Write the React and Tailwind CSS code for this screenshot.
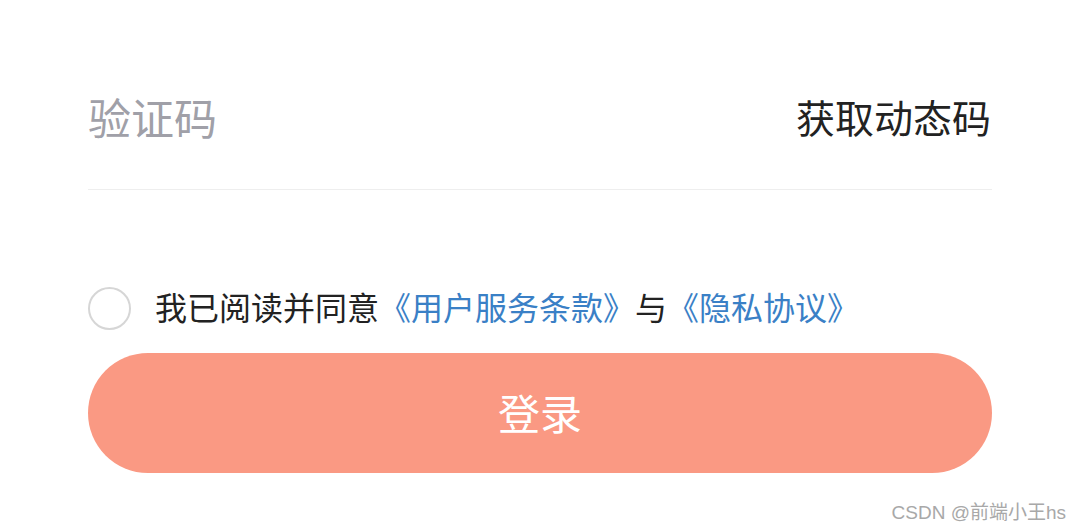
import React from 'react';

export default function App() {
  return (
    <div
      className="relative w-[1080px] h-[531px] bg-white overflow-hidden"
      style={{ fontFamily: '"Noto Sans CJK SC", "Noto Sans", sans-serif' }}
    >
      <div className="px-[88px] pt-[88px]">
        {/* verification code input */}
        <div className="flex items-center justify-between h-[56px]">
          <span className="text-[43px] leading-none text-[#a0a0a8]">验证码</span>
          <button className="text-[39px] leading-none text-[#222] pr-[1px]">获取动态码</button>
        </div>
        <div className="h-[46px] border-b border-[#eeeeee]" />

        {/* agreement */}
        <div className="flex items-center mt-[97px]">
          <div className="w-[43px] h-[43px] rounded-full border-2 border-[#d6d6d6] shrink-0" />
          <p className="ml-[24px] pb-[5px] text-[32px] leading-none text-[#222] whitespace-nowrap">
            我已阅读并同意<span className="text-[#3a80c6]">《用户服务条款》</span>与<span className="text-[#3a80c6]">《隐私协议》</span>
          </p>
        </div>

        {/* login */}
        <button className="mt-[23px] w-full h-[120px] rounded-full bg-[#fa9983] text-white text-[42px] leading-none pb-[3px]">
          登录
        </button>
      </div>

      <div
        className="absolute right-[14px] bottom-[9px] text-[19px] leading-none text-[#a8a8a8]"
        style={{ fontFamily: '"Liberation Sans", "Noto Sans CJK SC", sans-serif' }}
      >
        CSDN @前端小王hs
      </div>
    </div>
  );
}
